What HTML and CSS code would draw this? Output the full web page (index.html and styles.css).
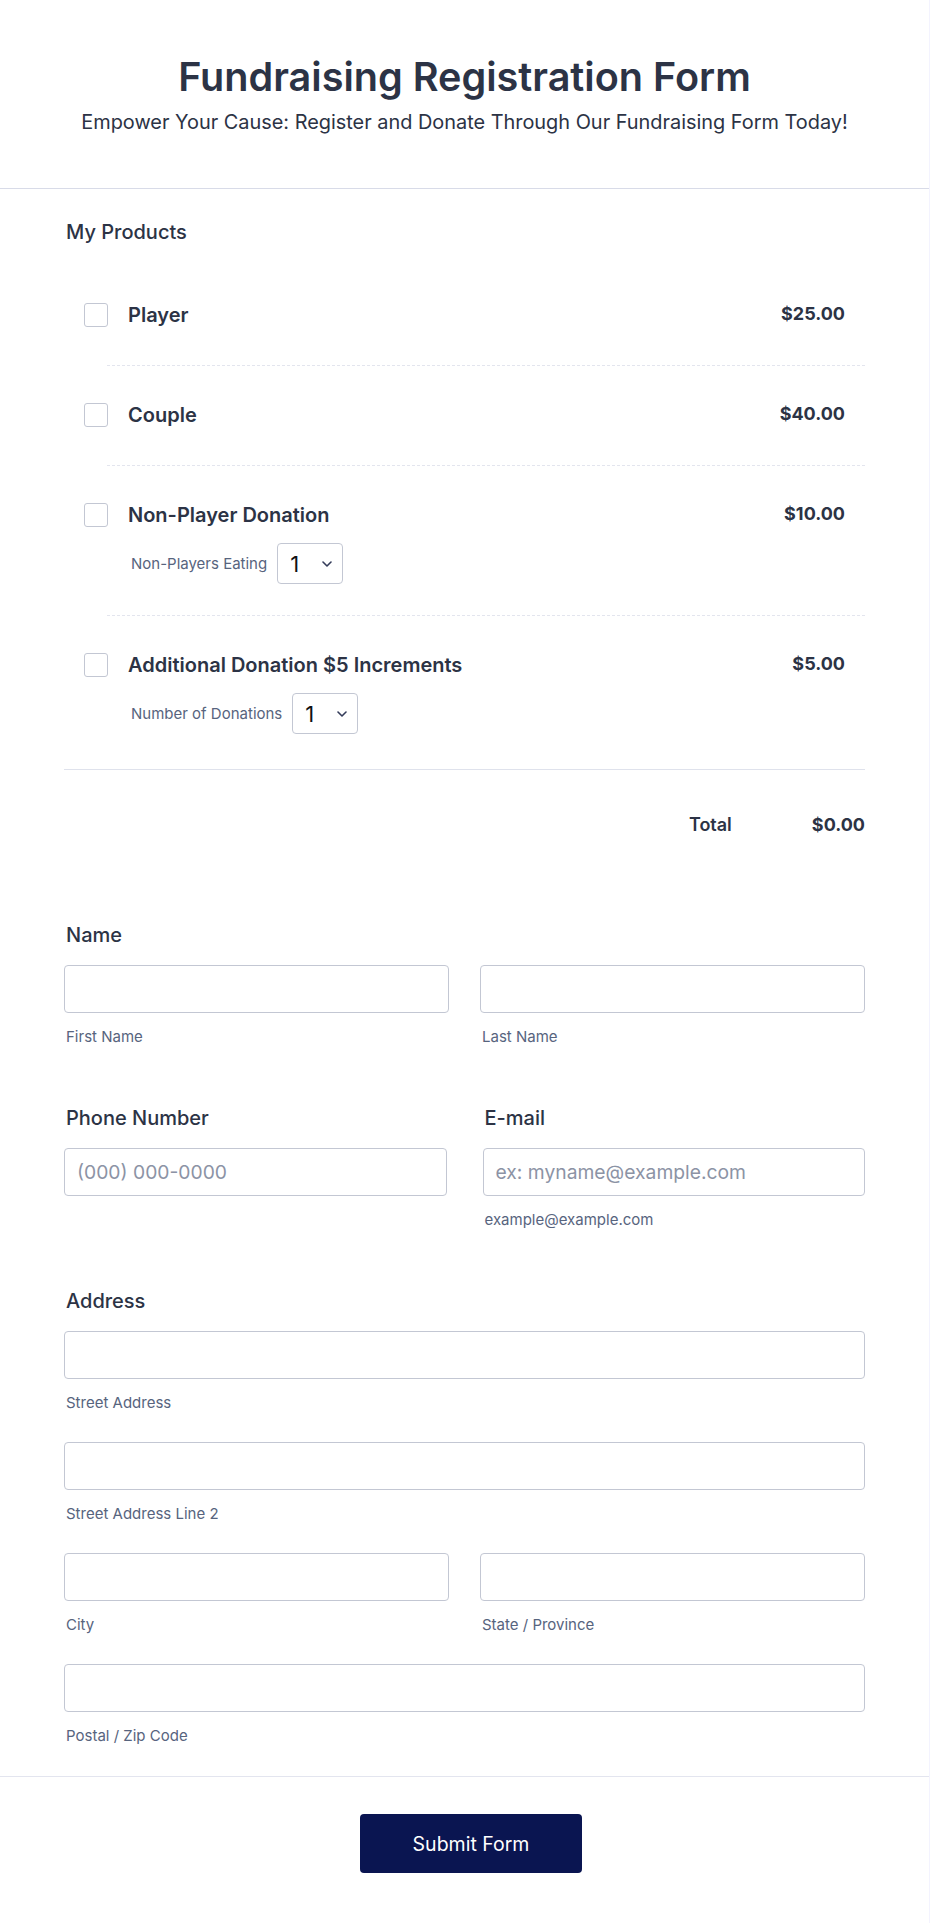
FILE: index.html
```html
<!DOCTYPE html>
<html lang="en">
<head>
<meta charset="utf-8">
<title>Fundraising Registration Form</title>
<link rel="stylesheet" href="styles.css">
</head>
<body>
<div class="page">
  <header class="head">
    <h1 class="title">Fundraising Registration Form</h1>
    <p class="subtitle">Empower Your Cause: Register and Donate Through Our Fundraising Form Today!</p>
  </header>

  <section class="products">
    <div class="label">My Products</div>
    <div class="plist">
      <div class="product">
        <div class="prow"><span class="cb"></span><span class="pname">Player</span><span class="price">$25.00</span></div>
      </div>
      <div class="divider"></div>
      <div class="product">
        <div class="prow"><span class="cb"></span><span class="pname">Couple</span><span class="price">$40.00</span></div>
      </div>
      <div class="divider"></div>
      <div class="product has-sub">
        <div class="prow"><span class="cb"></span><span class="pname">Non-Player Donation</span><span class="price">$10.00</span></div>
        <div class="sub">
          <span class="sublabel">Non-Players Eating</span>
          <div class="qty"><span class="qty-val">1</span><svg class="chev" width="10" height="6" viewBox="0 0 10 6"><polyline points="1,1 5,5 9,1" fill="none" stroke="#343c5a" stroke-width="1.6" stroke-linecap="round" stroke-linejoin="round"/></svg></div>
        </div>
      </div>
      <div class="divider"></div>
      <div class="product has-sub last">
        <div class="prow"><span class="cb"></span><span class="pname">Additional Donation $5 Increments</span><span class="price">$5.00</span></div>
        <div class="sub">
          <span class="sublabel">Number of Donations</span>
          <div class="qty"><span class="qty-val">1</span><svg class="chev" width="10" height="6" viewBox="0 0 10 6"><polyline points="1,1 5,5 9,1" fill="none" stroke="#343c5a" stroke-width="1.6" stroke-linecap="round" stroke-linejoin="round"/></svg></div>
        </div>
      </div>
    </div>
    <div class="total"><span class="total-label">Total</span><span class="total-val">$0.00</span></div>
  </section>

  <section class="fields">
    <div class="field">
      <div class="label">Name</div>
      <div class="grid2">
        <div class="col"><div class="input"></div><div class="sublabel">First Name</div></div>
        <div class="col"><div class="input"></div><div class="sublabel">Last Name</div></div>
      </div>
    </div>

    <div class="field grid2 wide-gap">
      <div class="col">
        <div class="label">Phone Number</div>
        <div class="input"><span class="ph">(000) 000-0000</span></div>
      </div>
      <div class="col">
        <div class="label">E-mail</div>
        <div class="input"><span class="ph">ex: myname@example.com</span></div>
        <div class="sublabel">example@example.com</div>
      </div>
    </div>

    <div class="field">
      <div class="label">Address</div>
      <div class="addr">
        <div class="col"><div class="input"></div><div class="sublabel">Street Address</div></div>
        <div class="col"><div class="input"></div><div class="sublabel">Street Address Line 2</div></div>
        <div class="grid2">
          <div class="col"><div class="input"></div><div class="sublabel">City</div></div>
          <div class="col"><div class="input"></div><div class="sublabel">State / Province</div></div>
        </div>
        <div class="col"><div class="input"></div><div class="sublabel">Postal / Zip Code</div></div>
      </div>
    </div>
  </section>

  <footer class="foot">
    <button class="submit" type="button">Submit Form</button>
  </footer>
</div>
</body>
</html>
```

FILE: styles.css
```css
html {
  background: #f3f3fe;
}
body {
  margin: 0;
  font-family: Inter, "Noto Sans", "Liberation Sans", sans-serif;
  color: #2c3345;
}
.page {
  width: 929px;
  background: #ffffff;
}

/* header */
.head {
  padding: 53px 0 52px;
  text-align: center;
  border-bottom: 1px solid #d8dbe8;
}
.title {
  margin: 0;
  font-size: 39.6px;
  line-height: 48px;
  font-weight: 600;
  color: #2c3345;
}
.subtitle {
  margin: 7px 0 0;
  font-size: 19.9px;
  line-height: 28px;
  font-weight: 400;
  color: #2c3345;
}

/* labels */
.label {
  font-size: 20px;
  line-height: 24px;
  font-weight: 500;
  padding-left: 2px;
  color: #2c3345;
}
.sublabel {
  font-size: 15px;
  line-height: 18px;
  color: #57647e;
  padding-left: 2px;
}

/* products */
.products {
  padding: 31px 64px 0;
}
.plist {
  margin-top: 22px;
}
.product {
  padding: 37px 20px 38px;
}
.product.has-sub {
  padding-bottom: 31px;
}
.product.last {
  padding-bottom: 35px;
  border-bottom: 1px solid #dfe2ec;
}
.prow {
  display: flex;
  align-items: flex-start;
}
.cb {
  width: 24px;
  height: 24px;
  box-sizing: border-box;
  border: 1px solid #c3c7d3;
  border-radius: 3px;
  flex: none;
  background: #fff;
}
.pname {
  margin-left: 20px;
  font-size: 20px;
  line-height: 24px;
  font-weight: 600;
  flex: 1;
}
.price {
  font-size: 18px;
  line-height: 22px;
  font-weight: 700;
}
.divider {
  margin-left: 43px;
  border-top: 1px dashed #e3e5ee;
}
.sub {
  display: flex;
  align-items: center;
  gap: 10px;
  margin-top: 16px;
  padding-left: 45px;
}
.sub .sublabel {
  padding-left: 2px;
}
.qty {
  width: 66px;
  height: 41px;
  box-sizing: border-box;
  border: 1px solid #c3c7d3;
  border-radius: 4px;
  display: flex;
  align-items: center;
  justify-content: space-between;
  padding: 0 10px 0 12px;
}
.qty-val {
  font-size: 22px;
  line-height: 26px;
  color: #111111;
}
.chev {
  display: block;
}

.total {
  display: flex;
  justify-content: flex-end;
  align-items: center;
  gap: 80px;
  margin-top: 43px;
  line-height: 24px;
  font-size: 18px;
}
.total-label {
  font-weight: 600;
}
.total-val {
  font-weight: 700;
}

/* fields */
.fields {
  padding: 86px 64px 31px;
  display: flex;
  flex-direction: column;
  gap: 60px;
}
.field > .label,
.col > .label {
  margin-bottom: 18px;
}
.grid2 {
  display: grid;
  grid-template-columns: 1fr 1fr;
  column-gap: 31px;
  row-gap: 30px;
}
.grid2.wide-gap {
  column-gap: 36px;
}
.addr {
  display: flex;
  flex-direction: column;
  gap: 30px;
}
.input {
  height: 48px;
  box-sizing: border-box;
  border: 1px solid #c3c7d3;
  border-radius: 4px;
  background: #fff;
  display: flex;
  align-items: center;
  padding: 0 12px;
}
.input + .sublabel {
  margin-top: 15px;
}
.ph {
  font-size: 19.3px;
  color: #8c93a5;
}

/* footer */
.foot {
  border-top: 1px solid #e3e5ef;
  padding: 37px 0 50px;
  display: flex;
  justify-content: center;
}
.submit {
  width: 222px;
  height: 59px;
  margin-left: 13px;
  border: none;
  border-radius: 4px;
  background: #0a1551;
  color: #ffffff;
  font-family: Inter, "Noto Sans", "Liberation Sans", sans-serif;
  font-size: 19.5px;
  font-weight: 400;
}
```
